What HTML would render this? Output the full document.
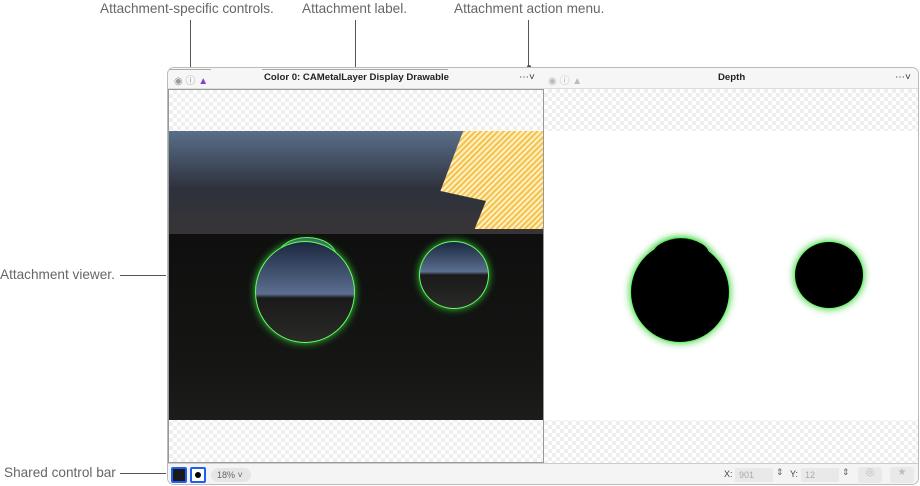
<!DOCTYPE html>
<html><head><meta charset="utf-8"><style>
*{margin:0;padding:0;box-sizing:border-box}
body{width:920px;height:486px;background:#fff;position:relative;overflow:hidden;font-family:"Liberation Sans",sans-serif}
.t{position:absolute;font-size:13.6px;color:#666;white-space:nowrap}
.l{position:absolute;background:#555}
.chk{background-color:#fff;background-image:linear-gradient(45deg,#eee 25%,transparent 25%,transparent 75%,#eee 75%),linear-gradient(45deg,#eee 25%,transparent 25%,transparent 75%,#eee 75%);background-size:8px 8px;background-position:0 0,4px 4px}
</style></head><body>
<div class="t" style="left:100px;top:1px">Attachment-specific controls.</div>
<div class="t" style="left:302px;top:1px">Attachment label.</div>
<div class="t" style="left:454px;top:1px">Attachment action menu.</div>
<div class="t" style="left:0;top:267px">Attachment viewer.</div>
<div class="t" style="left:4px;top:465px">Shared control bar</div>
<div class="l" style="left:190px;top:20px;width:1px;height:48px"></div>
<div class="l" style="left:355px;top:20px;width:1px;height:48px"></div>
<div class="l" style="left:528px;top:20px;width:1px;height:48px"></div>
<div class="l" style="left:120px;top:275px;width:46px;height:1px"></div>
<div class="l" style="left:120px;top:473px;width:46px;height:1px"></div>
<div style="position:absolute;left:528px;top:65px;width:4px;height:4px;border-radius:2px;background:#555;margin-left:-1.5px"></div>

<div style="position:absolute;left:167px;top:67px;width:752px;height:418px;border:1px solid #bbb;border-radius:7px;background:#f6f6f6;overflow:hidden">
 <div style="position:absolute;left:0;top:0;width:750px;height:21px;background:#f6f6f6;border-bottom:1px solid #ddd"></div>
 <div style="position:absolute;left:0;top:1px;width:43px;height:1px;background:#aaa"></div>
 <div style="position:absolute;left:94px;top:1px;width:186px;height:1px;background:#aaa"></div>
 <div style="position:absolute;left:6px;top:4px;font-size:10px;color:#999">&#9673; &#9432; <span style="color:#8a3fd1">&#9650;</span></div>
 <div style="position:absolute;left:96px;top:4px;font-size:9.6px;font-weight:bold;color:#222">Color 0: CAMetalLayer Display Drawable</div>
 <div style="position:absolute;left:351px;top:4px;font-size:10px;color:#333">&#8943;&#709;</div>
 <div style="position:absolute;left:380px;top:4px;font-size:10px;color:#bbb">&#9673; &#9432; &#9650;</div>
 <div style="position:absolute;left:550px;top:4px;font-size:9.6px;font-weight:bold;color:#222">Depth</div>
 <div style="position:absolute;left:727px;top:4px;font-size:10px;color:#333">&#8943;&#709;</div>

 <div class="chk" style="position:absolute;left:0;top:21px;width:376px;height:374px;border:1px solid #999"></div>
 <div style="position:absolute;left:1px;top:63px;width:374px;height:289px;background:linear-gradient(#5a6f8a 0%,#2e323c 20%,#3a3536 40%,#7a4a33 60%,#c8582a 78%,#222 81%,#101010 100%)">
  <div style="position:absolute;left:0;top:103px;width:374px;height:186px;background:linear-gradient(#0e0f0e,#151614 70%,#1c1c1a)"></div>
  <div style="position:absolute;left:260px;top:0;width:114px;height:100px;background:repeating-linear-gradient(135deg,#f3c250 0 2px,#fff0c0 2px 4px);clip-path:polygon(30% 0,100% 0,100% 98%,40% 98%,50% 70%,10% 60%)"></div>
  <div style="position:absolute;left:108px;top:106px;width:60px;height:40px;border-radius:50%;border:1.5px solid #6f6;background:#3a4a66"></div>
  <div style="position:absolute;left:86px;top:110px;width:100px;height:102px;border-radius:50%;border:1.5px solid #6f6;box-shadow:0 0 8px #3c3;background:linear-gradient(#1a2740,#5c6f90 52%,#1a1a1a 56%,#2a2a28)"></div>
  <div style="position:absolute;left:250px;top:110px;width:70px;height:68px;border-radius:50%;border:1.5px solid #6f6;box-shadow:0 0 8px #3c3;background:linear-gradient(#1a2740,#5c6f90 45%,#1a1a1a 50%,#2a2a28)"></div>
 </div>
 <div class="chk" style="position:absolute;left:376px;top:21px;width:375px;height:374px"></div>
 <div style="position:absolute;left:376px;top:63px;width:375px;height:289px;background:#fff">
  <div style="position:absolute;left:108px;top:106px;width:58px;height:40px;border-radius:50%;background:#000;border:1px solid #6f6;box-shadow:0 0 8px #3c3"></div>
  <div style="position:absolute;left:86px;top:110px;width:100px;height:102px;border-radius:50%;background:#000;border:1px solid #6f6;box-shadow:0 0 8px #3c3"></div>
  <div style="position:absolute;left:109px;top:108px;width:56px;height:30px;border-radius:50%;background:#000"></div>
  <div style="position:absolute;left:250px;top:110px;width:70px;height:68px;border-radius:50%;background:#000;border:1px solid #6f6;box-shadow:0 0 8px #3c3"></div>
 </div>
 <div style="position:absolute;left:0;top:395px;width:750px;height:22px;background:#f4f4f4;border-top:1px solid #ccc">
  <div style="position:absolute;left:3px;top:3px;width:16px;height:16px;border:2px solid #1f5ef5;border-radius:2px;background:#1a1a1a"></div>
  <div style="position:absolute;left:22px;top:3px;width:16px;height:16px;border:2px solid #1f5ef5;border-radius:2px;background:#fff"><div style="margin:3px auto;width:6px;height:6px;border-radius:50%;background:#000"></div></div>
  <div style="position:absolute;left:43px;top:4px;width:40px;height:14px;border-radius:7px;background:#e6e6e6;font-size:9px;color:#666;padding:2px 0 0 6px">18% &#709;</div>
  <div style="position:absolute;left:556px;top:5px;font-size:9px;color:#444">X:</div>
  <div style="position:absolute;left:567px;top:4px;width:38px;height:14px;background:#e9e9e9;font-size:9px;color:#aaa;padding:2px 4px">901</div>
  <div style="position:absolute;left:608px;top:3px;font-size:9px;color:#666">&#8661;</div>
  <div style="position:absolute;left:622px;top:5px;font-size:9px;color:#444">Y:</div>
  <div style="position:absolute;left:633px;top:4px;width:38px;height:14px;background:#e9e9e9;font-size:9px;color:#aaa;padding:2px 4px">12</div>
  <div style="position:absolute;left:674px;top:3px;font-size:9px;color:#666">&#8661;</div>
  <div style="position:absolute;left:690px;top:3px;width:24px;height:16px;background:#e9e9e9;border-radius:3px;font-size:10px;color:#bbb;text-align:center">&#9678;</div>
  <div style="position:absolute;left:722px;top:3px;width:24px;height:16px;background:#e9e9e9;border-radius:3px;font-size:10px;color:#bbb;text-align:center">&#9733;</div>
 </div>
</div>
</body></html>
